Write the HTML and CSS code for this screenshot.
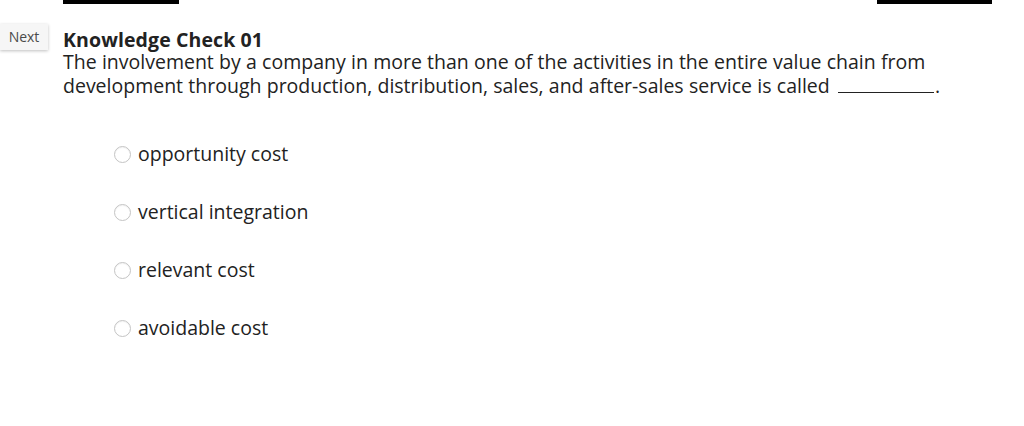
FILE: index.html
```html
<!DOCTYPE html>
<html>
<head>
<meta charset="utf-8">
<link rel="stylesheet" href="styles.css">
</head>
<body>
<div class="topbars">
  <div class="bar bar-left"></div>
  <div class="bar bar-right"></div>
</div>
<div class="main">
  <div class="next">Next</div>
  <div class="question">
    <div class="title">Knowledge Check 01</div>
    <div class="prompt">The involvement by a company in more than one of the activities in the entire value chain from development through production, distribution, sales, and after-sales service is called <span class="blank"></span>.</div>
    <div class="options">
      <label class="option"><span class="radio"></span><span class="label">opportunity cost</span></label>
      <label class="option"><span class="radio"></span><span class="label">vertical integration</span></label>
      <label class="option"><span class="radio"></span><span class="label">relevant cost</span></label>
      <label class="option"><span class="radio"></span><span class="label">avoidable cost</span></label>
    </div>
  </div>
</div>
</body>
</html>
```
FILE: styles.css
```css
html, body { margin: 0; padding: 0; background: #fff; }
body {
  font-family: "Open Sans", sans-serif;
  color: #222;
  width: 1024px;
  height: 426px;
  overflow: hidden;
}
.topbars {
  display: flex;
  justify-content: space-between;
  padding: 0 32px 0 63px;
  height: 4px;
}
.bar { width: 116px; height: 4px; background: #000; }
.bar-right { width: 115px; }
.main {
  display: flex;
  padding-top: 20px;
}
.next {
  width: 48px;
  height: 26px;
  box-sizing: border-box;
  background: #f6f6f6;
  box-shadow: 0 1px 3px rgba(0,0,0,0.25);
  font-size: 14px;
  color: #4a4a4a;
  line-height: 26px;
  text-align: center;
  flex: none;
}
.question {
  margin-left: 15px;
  padding-top: 5px;
}
.title {
  font-weight: 700;
  font-size: 19.5px;
  line-height: 21px;
  letter-spacing: 0.1px;
}
.prompt {
  font-size: 19.5px;
  line-height: 24px;
  width: 900px;
  word-spacing: 0.2px;
}
.blank {
  display: inline-block;
  width: 96px;
  border-bottom: 1px solid #222;
  margin-left: 3px;
  margin-right: 1px;
  vertical-align: baseline;
}
.options {
  display: flex;
  flex-direction: column;
  gap: 34px;
  padding: 44px 0 0 51px;
}
.option {
  display: flex;
  align-items: center;
  height: 24px;
  line-height: 24px;
  font-size: 19.5px;
}
.radio {
  width: 15px;
  height: 15px;
  border: 1px solid #c4c4c4;
  border-radius: 50%;
  margin-right: 7px;
  box-shadow: inset 0 1px 1px rgba(0,0,0,0.05);
  flex: none;
}
```
